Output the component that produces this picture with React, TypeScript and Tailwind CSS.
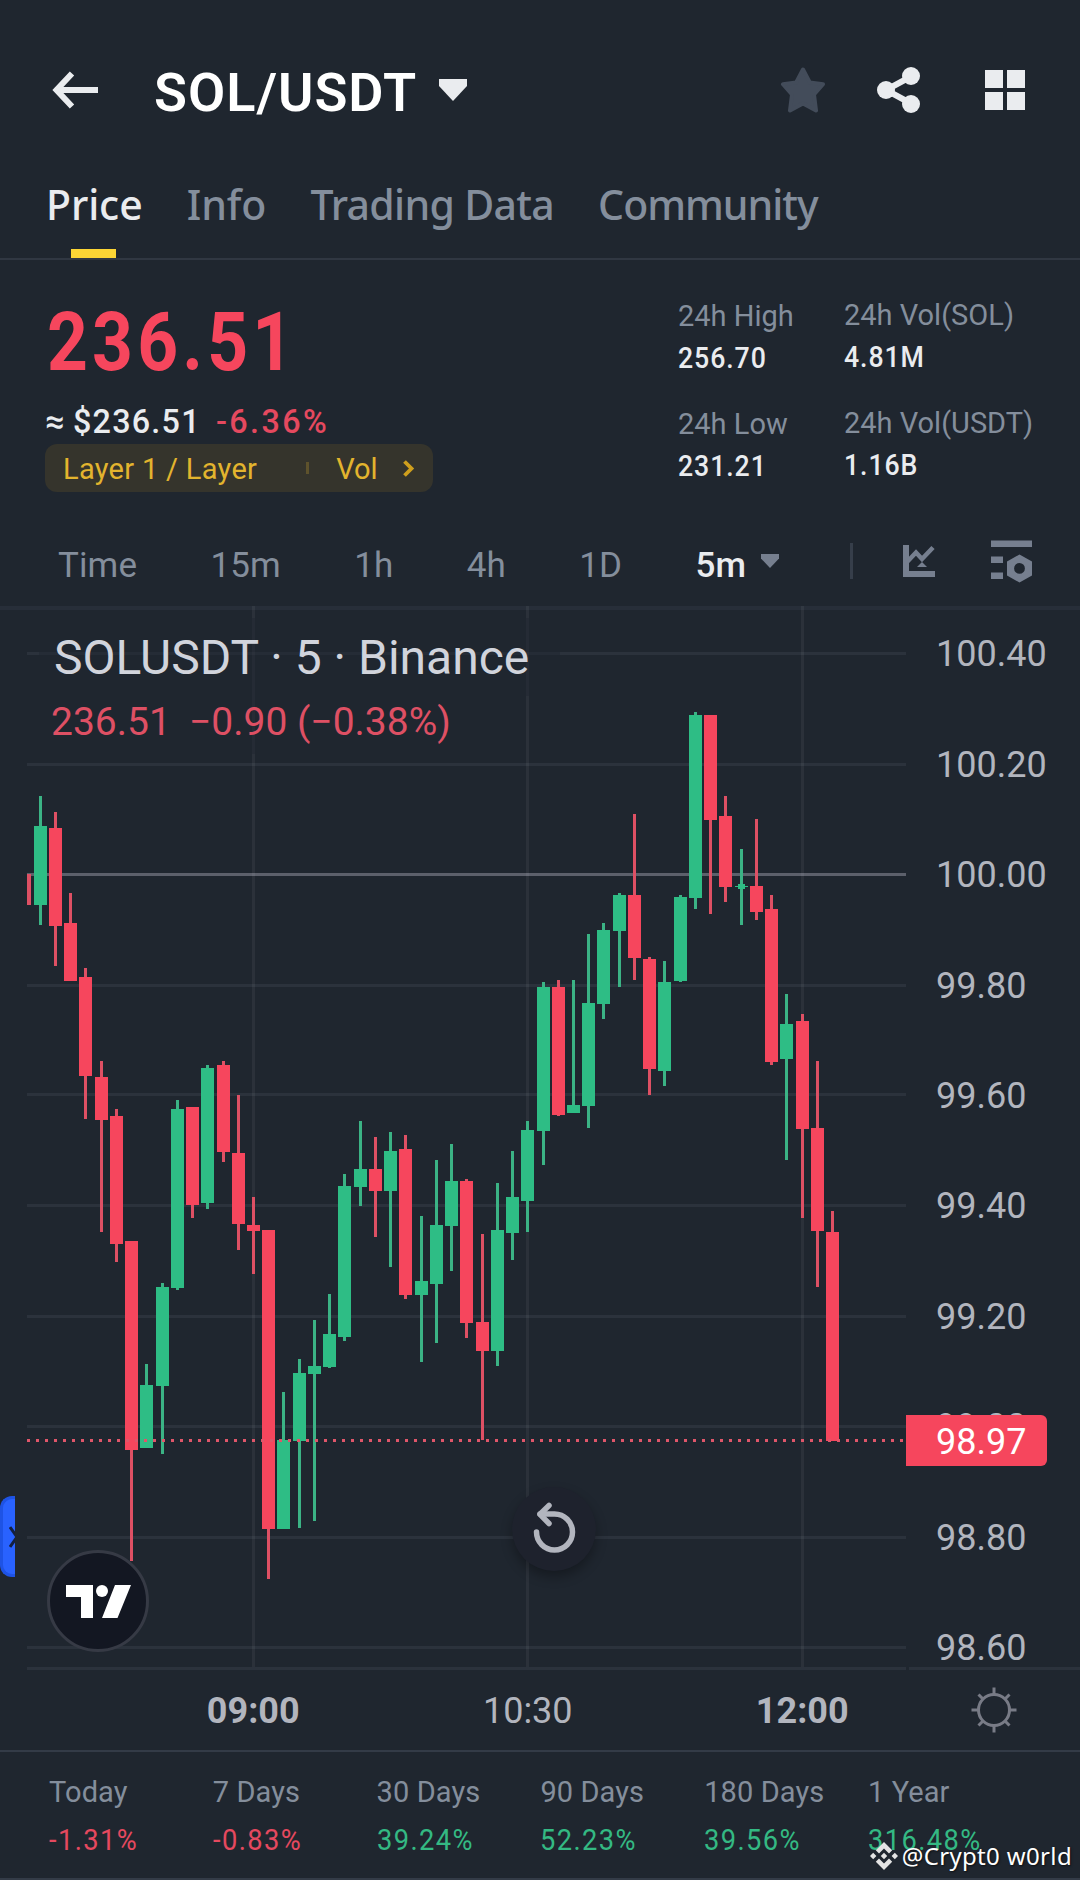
import type { ReactNode } from "react";

type Dir = "u" | "d";
/** x of the wick's left edge, wick top, body top, body bottom, wick bottom, direction */
type Candle = [number, number, number, number, number, Dir];

const CANDLES: Candle[] = [
  [39, 796, 826, 905, 925, "u"],
  [54, 812, 828, 926, 966, "d"],
  [69, 893, 923, 981, 981, "d"],
  [84, 968, 977, 1076, 1119, "d"],
  [100, 1061, 1077, 1120, 1232, "d"],
  [115, 1109, 1116, 1244, 1262, "d"],
  [130, 1241, 1241, 1450, 1561, "d"],
  [145, 1364, 1385, 1448, 1448, "u"],
  [161, 1283, 1287, 1386, 1454, "u"],
  [176, 1100, 1109, 1288, 1290, "u"],
  [191, 1107, 1107, 1205, 1218, "d"],
  [206, 1065, 1068, 1203, 1209, "u"],
  [222, 1061, 1065, 1152, 1162, "d"],
  [237, 1095, 1153, 1224, 1250, "d"],
  [252, 1197, 1225, 1231, 1274, "d"],
  [267, 1230, 1230, 1529, 1579, "d"],
  [282, 1392, 1440, 1529, 1529, "u"],
  [298, 1359, 1373, 1441, 1528, "u"],
  [313, 1320, 1366, 1374, 1521, "u"],
  [328, 1294, 1334, 1367, 1368, "u"],
  [343, 1174, 1186, 1337, 1341, "u"],
  [359, 1121, 1169, 1187, 1206, "u"],
  [374, 1137, 1169, 1191, 1237, "d"],
  [389, 1132, 1151, 1191, 1267, "u"],
  [404, 1135, 1149, 1295, 1299, "d"],
  [420, 1216, 1281, 1295, 1362, "u"],
  [435, 1160, 1225, 1284, 1343, "u"],
  [450, 1144, 1181, 1226, 1271, "u"],
  [465, 1179, 1181, 1323, 1338, "d"],
  [481, 1234, 1322, 1351, 1440, "d"],
  [496, 1183, 1230, 1351, 1366, "u"],
  [511, 1151, 1197, 1233, 1260, "u"],
  [526, 1121, 1130, 1201, 1232, "u"],
  [542, 982, 987, 1131, 1165, "u"],
  [557, 980, 987, 1115, 1116, "d"],
  [572, 980, 1105, 1113, 1113, "u"],
  [587, 934, 1003, 1106, 1128, "u"],
  [602, 923, 930, 1004, 1019, "u"],
  [618, 893, 895, 931, 987, "u"],
  [633, 814, 895, 958, 980, "d"],
  [648, 957, 959, 1069, 1095, "d"],
  [663, 961, 982, 1071, 1086, "u"],
  [679, 895, 897, 981, 982, "u"],
  [694, 712, 715, 898, 909, "u"],
  [709, 715, 715, 820, 914, "d"],
  [724, 796, 816, 887, 902, "d"],
  [740, 849, 886, 887, 925, "u"],
  [755, 819, 886, 912, 920, "d"],
  [770, 895, 909, 1062, 1065, "d"],
  [785, 994, 1024, 1059, 1160, "u"],
  [801, 1014, 1021, 1129, 1218, "d"],
  [816, 1061, 1128, 1231, 1287, "d"],
  [831, 1211, 1232, 1441, 1441, "d"],
];

const GRID_Y = [652, 763, 984, 873, 1093, 1204, 1315, 1425, 1536, 1646];
const GRID_X = [252, 526, 801];
const PRICES = ["100.40", "100.20", "100.00", "99.80", "99.60", "99.40", "99.20", "99.00", "98.80", "98.60"];

const BODY = { u: "#2ebd85", d: "#f6465d" };
const WICK = { u: "#3bb385", d: "#de5064" };

function CandleChart() {
  return (
    <svg className="block shrink-0" width="906" height="1061" viewBox="0 606 906 1061" shapeRendering="crispEdges">
      <rect x="0" y="606" width="906" height="4" fill="#272e39" />
      {GRID_Y.map((y) => (
        <rect key={y} x="27" y={y} width="879" height="3" fill={y === 873 ? "#5c606b" : "#2b323c"} />
      ))}
      {GRID_X.map((x) => (
        <rect key={x} x={x} y="606" width="3" height="1061" fill="#ffffff" fillOpacity="0.055" />
      ))}
      <rect x="39" y="618" width="521" height="78" fill="#1f262f" fillOpacity="0.5" />
      <rect x="39" y="696" width="421" height="58" fill="#1f262f" fillOpacity="0.5" />
      <rect x="27" y="874" width="4" height="31" fill={WICK.d} />
      {CANDLES.map(([x, wt, bt, bb, wb, d]) => (
        <g key={x}>
          <rect x={x} y={wt} width="3" height={wb - wt} fill={WICK[d]} />
          <rect x={x - 5} y={bt} width="13" height={bb - bt} fill={BODY[d]} />
        </g>
      ))}
      <rect x="738" y="884" width="7" height="5" fill={BODY.u} />
      <path d="M27 1440.5H906" stroke="#e0566a" strokeWidth="3" strokeDasharray="3 6" />
    </svg>
  );
}

function Stat({ label, value }: { label: string; value: string }) {
  return (
    <div className="flex flex-col gap-[13px] text-[29px] leading-none whitespace-nowrap">
      <span className="text-[#848e9c]">{label}</span>
      <span className="origin-left scale-x-[.92] font-medium tracking-[1px] text-[#eaecef]">{value}</span>
    </div>
  );
}

function Tab({ children, active, className }: { children: ReactNode; active?: boolean; className?: string }) {
  return (
    <div className={"flex h-full flex-col items-center justify-between pt-[4px] " + (className ?? "")}>
      <span className={active ? "text-[#eaecef]" : "text-[#848e9c]"}>{children}</span>
      {active && <span className="mr-[2px] h-[9px] w-[45px] bg-[#fcd535]" />}
    </div>
  );
}

const PERIODS: [string, string][] = [
  ["Today", "-1.31%"],
  ["7 Days", "-0.83%"],
  ["30 Days", "39.24%"],
  ["90 Days", "52.23%"],
  ["180 Days", "39.56%"],
  ["1 Year", "316.48%"],
];

export default function App() {
  return (
    <div className="relative flex h-[1880px] w-[1080px] flex-col overflow-hidden bg-[#1f262f] font-['Roboto',sans-serif]">
      <header className="flex h-[180px] shrink-0 items-center pl-[52px]">
        <svg className="shrink-0" width="47" height="38" viewBox="0 0 47 38" fill="none" stroke="#eaecef" strokeWidth="6">
          <path d="M5 19H46M20 2.5L4.5 19L20 35.5" />
        </svg>
        <h1 className="ml-[55px] w-[262px] pt-[5px] text-[54px] leading-none font-semibold tracking-[1px] text-white">SOL/USDT</h1>
        <svg className="ml-[23px] shrink-0" width="28" height="22" viewBox="0 0 28 22" fill="#eaecef">
          <path d="M0 0H28V7L14 22L0 7Z" />
        </svg>
        <svg className="ml-[313px] shrink-0" width="46" height="46" viewBox="0 0 46 46" fill="#434c5a" stroke="#434c5a" strokeWidth="4" strokeLinejoin="round">
          <path d="M23 2.5L29.8 15.4L43 17.3L34 27.5L36 43.5L23 36.5L10 43.5L12 27.5L3 17.3L16.2 15.4Z" />
        </svg>
        <svg className="ml-[51px] shrink-0" width="44" height="46" viewBox="0 0 44 46" fill="#eaecef">
          <path d="M35 9L9 23L35 37" fill="none" stroke="#eaecef" strokeWidth="6" />
          <circle cx="34" cy="9" r="9" />
          <circle cx="9" cy="23" r="9" />
          <circle cx="34" cy="37" r="9" />
        </svg>
        <div className="ml-[64px] grid grid-cols-2 gap-1">
          <i className="h-[18px] w-[18px] bg-[#eaecef]" />
          <i className="h-[18px] w-[18px] bg-[#eaecef]" />
          <i className="h-[18px] w-[18px] bg-[#eaecef]" />
          <i className="h-[18px] w-[18px] bg-[#eaecef]" />
        </div>
      </header>

      <nav className="flex h-[80px] shrink-0 gap-[44.2px] border-b-2 border-[#303742] pl-[46px] font-['Noto_Sans',sans-serif] text-[41px] leading-none font-medium whitespace-nowrap">
        <Tab active className="tracking-[-0.1px]">Price</Tab>
        <Tab className="tracking-[-0.1px]">Info</Tab>
        <Tab className="tracking-[-0.7px]">Trading Data</Tab>
        <Tab className="tracking-[-1px]">Community</Tab>
      </nav>

      <section className="flex h-[256px] shrink-0 pl-[45px]">
        <div className="w-[633px] pt-[41px]">
          <div className="ml-[2px] w-[300px] origin-left scale-x-[.87] text-[82px] leading-none font-bold tracking-[4.8px] text-[#f6465d]">236.51</div>
          <div className="mt-[21px] flex h-[34px] text-[34px] leading-none font-medium whitespace-nowrap">
            <span className="w-[28px] text-[#eaecef]">≈</span>
            <span className="w-[142.5px] origin-left scale-x-[.95] tracking-[1.3px] text-[#eaecef]">$236.51</span>
            <span className="origin-left scale-x-[.95] tracking-[2.5px] text-[#e5495f]">-6.36%</span>
          </div>
          <div className="mt-[6px] flex h-[48px] w-[388px] items-center rounded-xl bg-[#35342c] pl-[18px] text-[29px] leading-none text-[#e3b42e]">
            <span className="pt-[2px] tracking-[0.3px]">Layer 1 / Layer</span>
            <span className="ml-[49px] h-[12px] w-[3px] bg-[#5e522c]" />
            <span className="ml-[27px] pt-[2px]">Vol</span>
            <svg className="ml-[25px]" width="12" height="17" viewBox="0 0 12 17" fill="none" stroke="#cf9f1d" strokeWidth="3.8">
              <path d="M1.5 1.5L8.5 8.5L1.5 15.5" />
            </svg>
          </div>
        </div>
        <div className="flex w-[165px] flex-col gap-[37px] pt-[42px]">
          <Stat label="24h High" value="256.70" />
          <Stat label="24h Low" value="231.21" />
        </div>
        <div className="flex flex-col gap-[37px] pt-[41px] pl-px">
          <Stat label="24h Vol(SOL)" value="4.81M" />
          <Stat label="24h Vol(USDT)" value="1.16B" />
        </div>
      </section>

      <section className="flex h-[90px] shrink-0 items-center pl-[58px]">
        <div className="flex gap-[73.4px] pt-[8px] text-[35px] leading-none tracking-[0.1px] text-[#848e9c]">
          <span>Time</span>
          <span>15m</span>
          <span>1h</span>
          <span>4h</span>
          <span>1D</span>
          <span className="font-medium text-[#eaecef]">5m</span>
        </div>
        <svg className="ml-[15px] shrink-0" width="18" height="14" viewBox="0 0 18 14" fill="#767f8f">
          <path d="M0 0H18V4.5L9 14L0 4.5Z" />
        </svg>
        <div className="ml-[70.5px] h-[36px] w-[3px] bg-[#363e4a]" />
        <svg className="ml-[50px] shrink-0" width="32" height="32" viewBox="0 0 32 32" fill="none" stroke="#767f8f">
          <path d="M3 0V29H32" strokeWidth="6" />
          <path d="M4 17L13 7.5L19 14L30 2.5" strokeWidth="4.5" />
          <path d="M14 22L19 17L24 22Z" fill="#767f8f" stroke="none" />
        </svg>
        <svg className="ml-[56px] shrink-0" width="42" height="43" viewBox="0 0 42 43" fill="#767f8f">
          <path d="M0 0.5H41V7H0ZM0 16.5H12V23H0ZM0 32.5H12V39H0Z" />
          <path fillRule="evenodd" d="M28.5 14.5L41 21.5V35.5L28.5 42.5L16 35.5V21.5ZM28.5 23A5.3 5.3 0 1 0 28.5 33.8A5.3 5.3 0 1 0 28.5 23Z" />
        </svg>
      </section>

      <section className="relative flex h-[1061px] shrink-0">
        <CandleChart />
        <div className="flex w-[174px] flex-col border-t-4 border-[#272e39]">
          <div className="mt-[-11px] flex flex-col pl-[30px] text-[36px] leading-none text-[#b2b5be]">
            {PRICES.map((p) => (
              <span key={p} className="flex h-[110.45px] shrink-0 items-center">
                {p}
              </span>
            ))}
          </div>
        </div>

        <div className="absolute top-[28px] left-[54px] text-[48px] leading-none whitespace-pre text-[#d1d4dc]">SOLUSDT · 5 · Binance</div>
        <div className="absolute top-[97px] left-[51px] flex text-[39px] leading-none whitespace-nowrap text-[#de5064]">
          <span className="w-[138px]">236.51</span>
          <span className="w-[108px]">−0.90</span>
          <span>(−0.38%)</span>
        </div>
        <div className="absolute top-[809px] left-[906px] flex h-[51px] w-[141px] items-center rounded-r-md bg-[#f6465d] pt-[2px] pl-[30px] text-[36px] leading-none text-white">98.97</div>

        <div className="absolute top-[890px] left-0 flex h-[81px] w-[15px] items-center overflow-hidden rounded-l-[12px] border-y-3 border-l-3 border-[#1e53e5] bg-[#2962ff]">
          <svg className="ml-[6px] shrink-0" width="12" height="22" viewBox="0 0 12 22" fill="none" stroke="#14203f" strokeWidth="3">
            <path d="M1 1L8 11L1 21" />
          </svg>
        </div>

        <div className="absolute top-[944px] left-[46.5px] flex h-[102px] w-[102px] items-center justify-center rounded-full border-3 border-[#363a45] bg-[#131722] pt-px pl-px">
          <svg width="65" height="33" viewBox="0 0 65 33" fill="#ffffff">
            <path d="M0 0H27V33H15V12H0ZM49 0H65L51.5 33H36Z" />
            <circle cx="36" cy="6" r="6" />
          </svg>
        </div>

        <div className="absolute top-[881px] left-[512px] h-[84px] w-[84px] rounded-full bg-[#1e222d] shadow-[0_6px_12px_rgba(0,0,0,0.3)]">
          <svg width="84" height="84" viewBox="512 1487 84 84" fill="none" stroke="#b2b5be" strokeWidth="5.5" strokeLinecap="round" strokeLinejoin="round">
            <path d="M536.5 1532A18 18 0 1 0 554.5 1514H540" />
            <path d="M549 1505.5L540 1514.3L549 1523.5" />
          </svg>
        </div>
      </section>

      <div className="flex h-[3px] shrink-0 gap-[3px] pl-[27px]">
        <div className="w-[879px] bg-[#2b323c]" />
        <div className="flex-1 bg-[#2b323c]" />
      </div>

      <section className="flex h-[80px] shrink-0 items-center pl-[116px] text-center text-[36px] leading-none text-[#b2b5be]">
        <span className="w-[274.5px] pt-px font-bold">09:00</span>
        <span className="w-[274.5px] pt-px">10:30</span>
        <span className="w-[274.5px] pt-px font-bold">12:00</span>
        <svg className="ml-[31px]" width="46" height="46" viewBox="-23 -23 46 46" fill="none" stroke="#787b86" strokeWidth="3">
          <circle r="15.5" />
          <path d="M0-22.5V-16M0 22.5V16M-22.5 0H-16M22.5 0H16M-15.5-15.5L-11-11M15.5-15.5L11-11M-15.5 15.5L-11 11M15.5 15.5L11 11" />
        </svg>
      </section>

      <section className="flex flex-1 border-y-2 border-[#333b47] pl-[49px] pt-[26px] text-[29px] leading-none whitespace-nowrap">
        {PERIODS.map(([label, value]) => (
          <div key={label} className="flex w-[163.8px] shrink-0 flex-col gap-[19px]">
            <span className="tracking-[0.1px] text-[#848e9c]">{label}</span>
            <span className={"origin-left scale-x-[.94] tracking-[1.5px] " + (value.startsWith("-") ? "text-[#e5495f]" : "text-[#34b983]")}>{value}</span>
          </div>
        ))}
      </section>

      <div className="absolute right-[8px] bottom-[10px] flex items-center font-['Noto_Sans',sans-serif] text-[24px] leading-none tracking-[0.35px] text-white [text-shadow:1px_1px_2px_rgba(0,0,0,0.6)]">
        <svg className="mr-[4px]" width="28" height="28" viewBox="0 0 28 28" fill="#e4e4e4">
          <path d="M14 0L22.2 8.2L19 11.4L14 6.4L9 11.4L5.8 8.2ZM14 28L22.2 19.8L19 16.6L14 21.6L9 16.6L5.8 19.8ZM0 14L3.2 10.8L6.4 14L3.2 17.2ZM28 14L24.8 10.8L21.6 14L24.8 17.2ZM14 10.8L17.2 14L14 17.2L10.8 14Z" />
        </svg>
        @Crypt0 w0rld
      </div>
    </div>
  );
}
